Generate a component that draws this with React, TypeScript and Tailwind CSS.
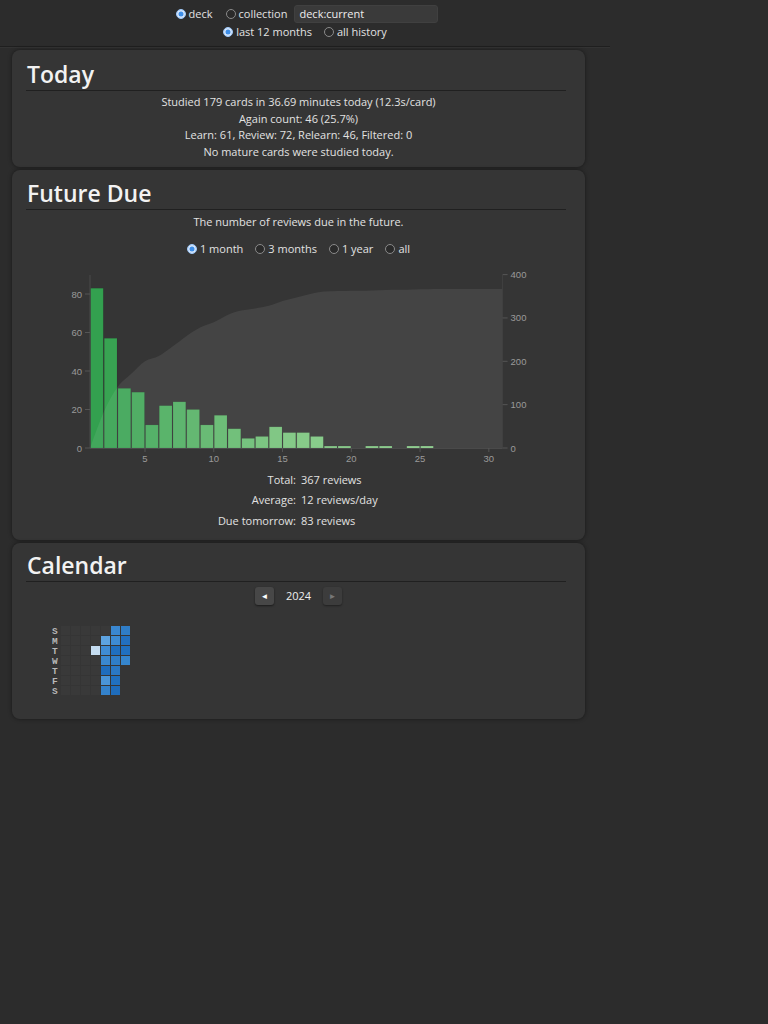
import React from "react";

const due = [83, 57, 31, 29, 12, 22, 24, 20, 12, 17, 10, 5, 6, 11, 8, 8, 6, 1, 1, 0, 1, 1, 0, 1, 1, 0, 0, 0, 0, 0];

const X0 = 78;
const STEP = 13.753;
const BASE = 183;
const xAt = (d: number) => X0 + (d - 1) * STEP;
const yLeft = (v: number) => BASE - v * 1.925;
const yRight = (v: number) => BASE - v * 0.4335;

function barColor(d: number) {
  const a = [51, 160, 79];
  const b = [124, 198, 127];
  const c = [150, 215, 148];
  const mix = (p: number[], q: number[], t: number) => p.map((v, i) => Math.round(v + (q[i] - v) * t));
  const rgb = d <= 15 ? mix(a, b, (d - 1) / 14) : mix(b, c, (d - 15) / 15);
  return `rgb(${rgb[0]},${rgb[1]},${rgb[2]})`;
}

// monotone cubic path through points, like d3's curveMonotoneX
function monotone(pts: [number, number][]) {
  const n = pts.length;
  const s: number[] = [];
  for (let i = 0; i < n - 1; i++) s.push((pts[i + 1][1] - pts[i][1]) / (pts[i + 1][0] - pts[i][0]));
  const t: number[] = [];
  for (let i = 0; i < n; i++) {
    if (i === 0) t.push(s[0]);
    else if (i === n - 1) t.push(s[n - 2]);
    else {
      const s0 = s[i - 1];
      const s1 = s[i];
      const p = (s0 + s1) / 2;
      t.push((Math.sign(s0) + Math.sign(s1)) * Math.min(Math.abs(s0), Math.abs(s1), 0.5 * Math.abs(p)) || 0);
    }
  }
  let d = `M${pts[0][0]},${pts[0][1]}`;
  for (let i = 0; i < n - 1; i++) {
    const [x0, y0] = pts[i];
    const [x1, y1] = pts[i + 1];
    const h = (x1 - x0) / 3;
    d += ` C${x0 + h},${y0 + h * t[i]} ${x1 - h},${y1 - h * t[i + 1]} ${x1},${y1}`;
  }
  return d;
}

function Radio({ label, checked }: { label: string; checked?: boolean }) {
  return (
    <label className="flex items-center gap-[3px]">
      {checked ? (
        <span className="w-[10px] h-[10px] rounded-full border border-[#a9cdf7] bg-[#3d8ee8] shadow-[inset_0_0_0_1.5px_#dbe9fb]" />
      ) : (
        <span className="w-[10px] h-[10px] rounded-full border border-[#8a8a8a] bg-[#2a2a2a]" />
      )}
      <span>{label}</span>
    </label>
  );
}

function Card({ title, children, top = "pt-[8px]" }: { title: string; children: React.ReactNode; top?: string }) {
  return (
    <div className="ml-[12px] w-[573px] rounded-[8px] bg-[#353535] shadow-[0_0_4px_rgba(0,0,0,0.45)]">
      <div className={"pl-[14px] pr-[19px] " + top}>
        <h1 className="text-[23px] leading-[32px] font-semibold text-[#f2f2f2] border-b border-[#202020] pl-[1px]">{title}</h1>
      </div>
      {children}
    </div>
  );
}

function DueChart() {
  const cum: [number, number][] = [[xAt(1), yRight(0)]];
  let total = 0;
  due.forEach((v, i) => {
    total += v;
    cum.push([xAt(i + 2), yRight(total)]);
  });
  const line = monotone(cum);
  const area = `${line} L${xAt(31)},${BASE} L${xAt(1)},${BASE} Z`;

  return (
    <svg width="573" height="205" className="block" fontFamily="'Liberation Sans', Arial, sans-serif" fontSize="9.5">
      {due.map((v, i) =>
        v > 0 ? (
          <rect
            key={i}
            x={xAt(i + 1) + 0.5}
            y={yLeft(v)}
            width={STEP - 1}
            height={BASE - yLeft(v)}
            fill={barColor(i + 1)}
            stroke="rgba(0,0,0,0.12)"
            strokeWidth="0.6"
          />
        ) : null
      )}
      <path d={area} fill="rgba(255,255,255,0.075)" />

      <line x1={X0} y1={10} x2={X0} y2={BASE} stroke="#4a4a4a" />
      {[0, 20, 40, 60, 80].map((v) => (
        <g key={v}>
          <line x1={X0 - 5} y1={yLeft(v)} x2={X0} y2={yLeft(v)} stroke="#555" />
          <text x={X0 - 8} y={yLeft(v) + 3.5} textAnchor="end" fill="#9a9a9a">
            {v}
          </text>
        </g>
      ))}

      <line x1={xAt(31)} y1={10} x2={xAt(31)} y2={BASE} stroke="#404040" />
      {[0, 100, 200, 300, 400].map((v) => (
        <g key={v}>
          <line x1={xAt(31)} y1={yRight(v)} x2={xAt(31) + 5} y2={yRight(v)} stroke="#555" />
          <text x={xAt(31) + 8} y={yRight(v) + 3.5} fill="#9a9a9a">
            {v}
          </text>
        </g>
      ))}

      <line x1={X0} y1={BASE + 0.5} x2={xAt(31)} y2={BASE + 0.5} stroke="#4a4a4a" />
      {[5, 10, 15, 20, 25, 30].map((d) => (
        <g key={d}>
          <line x1={xAt(d)} y1={BASE} x2={xAt(d)} y2={BASE + 4} stroke="#555" />
          <text x={xAt(d)} y={BASE + 14} textAnchor="middle" fill="#9a9a9a">
            {d}
          </text>
        </g>
      ))}
    </svg>
  );
}

const calCells: Record<string, string> = {
  "0-5": "#3a87d0",
  "0-6": "#2f7dc7",
  "1-4": "#5da3e0",
  "1-5": "#3d8bd3",
  "1-6": "#2270c0",
  "2-3": "#c4dcf0",
  "2-4": "#3f8cd4",
  "2-5": "#1f6fbf",
  "2-6": "#2070c0",
  "3-4": "#3a88d0",
  "3-5": "#2f7ec8",
  "3-6": "#3585cd",
  "4-4": "#1f6dbd",
  "4-5": "#2a78c4",
  "5-4": "#4a95d8",
  "5-5": "#2070bf",
  "6-4": "#3482cb",
  "6-5": "#1e6cbb",
};

function CalendarGrid() {
  const days = ["S", "M", "T", "W", "T", "F", "S"];
  const cells = [];
  for (let r = 0; r < 7; r++) {
    for (let c = 0; c < 7; c++) {
      const color = calCells[`${r}-${c}`];
      const faint = c < 4 || (c === 4 && r === 0);
      if (!color && !faint) continue;
      cells.push(
        <rect key={`${r}-${c}`} x={49 + c * 10} y={r * 10} width="9" height="9" fill={color ?? "#393939"} />
      );
    }
  }
  return (
    <svg width="140" height="72" className="block" fontFamily="'Liberation Mono', monospace" fontSize="9.5" fontWeight="bold">
      {days.map((d, i) => (
        <text key={i} x={40} y={i * 10 + 8} fill="#b8b8b8">
          {d}
        </text>
      ))}
      {cells}
    </svg>
  );
}

export default function App() {
  return (
    <div className="min-h-screen w-full bg-[#2c2c2c] text-[#e2e2e2] text-[11px] font-['Open_Sans',sans-serif]">
      <div className="w-[610px] h-[47px] border-b border-[#1f1f1f] shadow-[0_1px_0_#333] flex flex-col items-center pt-[5px]">
        <div className="flex items-center h-[18px] pl-[4px]">
          <Radio label="deck" checked />
          <div className="w-[13px]" />
          <Radio label="collection" />
          <div className="ml-[7px] w-[144px] h-[18px] rounded-[3px] bg-[#3a3a3a] border border-[#404040] px-[4px] flex items-center text-[#eee]">
            deck:current
          </div>
        </div>
        <div className="flex items-center h-[18px] gap-[12px]">
          <Radio label="last 12 months" checked />
          <Radio label="all history" />
        </div>
      </div>

      <div className="flex flex-col gap-[3px] pt-[3px]">
        <Card title="Today">
          <div className="flex flex-col items-center leading-[16.7px] pt-[3px] pb-[6px]">
            <div>Studied 179 cards in 36.69 minutes today (12.3s/card)</div>
            <div>Again count: 46 (25.7%)</div>
            <div>Learn: 61, Review: 72, Relearn: 46, Filtered: 0</div>
            <div>No mature cards were studied today.</div>
          </div>
        </Card>

        <Card title="Future Due" top="pt-[7px]">
          <div className="text-center leading-[16px] mt-[4px]">The number of reviews due in the future.</div>
          <div className="flex justify-center items-center gap-[12px] mt-[11px] h-[16px]">
            <Radio label="1 month" checked />
            <Radio label="3 months" />
            <Radio label="1 year" />
            <Radio label="all" />
          </div>
          <div className="mt-[8px]">
            <DueChart />
          </div>
          <div className="grid grid-cols-[1fr_1fr] gap-x-[5px] leading-[20.5px] pb-[9px]">
            <div className="text-right">Total:</div>
            <div>367 reviews</div>
            <div className="text-right">Average:</div>
            <div>12 reviews/day</div>
            <div className="text-right">Due tomorrow:</div>
            <div>83 reviews</div>
          </div>
        </Card>

        <Card title="Calendar" top="pt-[6px]">
          <div className="flex justify-center items-center mt-[5px]">
            <button className="w-[19px] h-[18px] rounded-[3px] bg-[#474747] shadow-[0_1px_2px_rgba(0,0,0,0.5)] text-[8px] text-white flex items-center justify-center">
              ◄
            </button>
            <span className="mx-[12px] text-[#eee]">2024</span>
            <button className="w-[19px] h-[18px] rounded-[3px] bg-[#3c3c3c] shadow-[0_1px_2px_rgba(0,0,0,0.4)] text-[8px] text-[#777] flex items-center justify-center">
              ►
            </button>
          </div>
          <div className="mt-[21px] pb-[21px]">
            <CalendarGrid />
          </div>
        </Card>
      </div>
    </div>
  );
}
